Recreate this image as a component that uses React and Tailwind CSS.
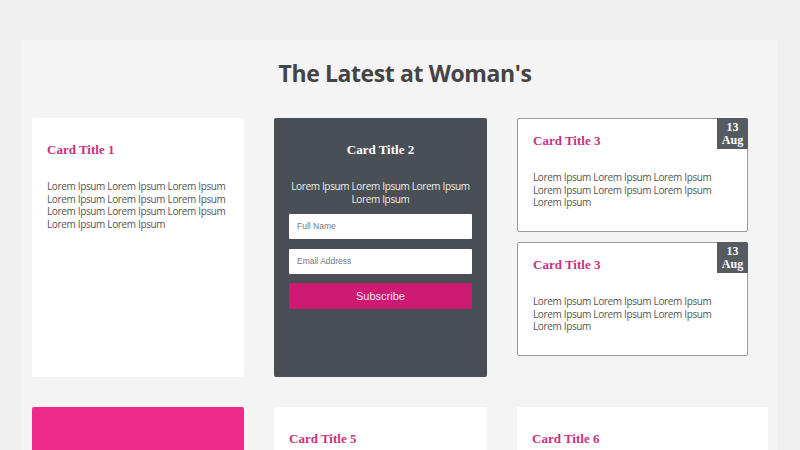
export default function App() {
  const serif = { fontFamily: '"Liberation Serif", "Times New Roman", serif' };
  const lorem3 = "Lorem Ipsum Lorem Ipsum Lorem Ipsum Lorem Ipsum Lorem Ipsum Lorem Ipsum Lorem Ipsum";
  const DateCard = () => (
    <div className="relative w-[231px] h-[114px] bg-white border border-[#9a9a9a] rounded-[2px] px-[15px]">
      <div className="absolute top-[-1px] right-[-1px] w-[31px] h-[31px] bg-[#565b62] text-white text-[12px] font-bold leading-[13px] flex flex-col items-center justify-center rounded-tr-[2px]" style={serif}>
        <span>13</span>
        <span>Aug</span>
      </div>
      <h3 className="text-[#cc2f7f] text-[13px] font-bold mt-[13px] leading-[18px]" style={serif}>Card Title 3</h3>
      <p className="mt-[21px] text-[10px] leading-[12.5px] tracking-[-0.35px] text-[#555] w-[190px]">{lorem3}</p>
    </div>
  );
  return (
    <div className="min-h-[450px] bg-[#efefef] pt-[40px] px-[21px] overflow-hidden" style={{ fontFamily: '"Open Sans", sans-serif' }}>
      <div className="bg-[#f4f4f4] w-[757px] h-[410px] pl-[11px] pt-[18px]">
        <h1 className="text-center text-[23px] font-bold text-[#444] leading-[30px] tracking-[-0.4px]">The Latest at Woman's</h1>
        <div className="grid grid-cols-[212px_213px_251px] gap-x-[30px] gap-y-[30px] mt-[30px]">
          <div className="bg-white h-[259px] rounded-[2px] px-[15px]">
            <h3 className="text-[#cc2f7f] text-[13px] font-bold mt-[23px] leading-[18px]" style={serif}>Card Title 1</h3>
            <p className="mt-[21px] text-[10px] leading-[12.5px] tracking-[-0.35px] text-[#555]">Lorem Ipsum Lorem Ipsum Lorem Ipsum Lorem Ipsum Lorem Ipsum Lorem Ipsum Lorem Ipsum Lorem Ipsum Lorem Ipsum Lorem Ipsum Lorem Ipsum</p>
          </div>
          <div className="bg-[#4a4f55] h-[259px] rounded-[2px] px-[15px] flex flex-col">
            <h3 className="text-white text-[13px] font-bold mt-[23px] leading-[18px] text-center" style={serif}>Card Title 2</h3>
            <p className="mt-[21px] text-[10px] leading-[12.5px] tracking-[-0.35px] text-[#eee] text-center">Lorem Ipsum Lorem Ipsum Lorem Ipsum Lorem Ipsum</p>
            <div className="mt-[9px] h-[25px] bg-white rounded-[1px] flex items-center px-[8px] text-[8.5px] text-[#777]" style={{ fontFamily: '"Liberation Sans", Arial, sans-serif' }}>Full Name</div>
            <div className="mt-[10px] h-[25px] bg-white rounded-[1px] flex items-center px-[8px] text-[8.5px] text-[#777]" style={{ fontFamily: '"Liberation Sans", Arial, sans-serif' }}>Email Address</div>
            <div className="mt-[9px] h-[26px] bg-[#cd1a72] rounded-[1px] flex items-center justify-center text-[11px] text-[#fbe0ee]" style={{ fontFamily: '"Liberation Sans", Arial, sans-serif' }}>Subscribe</div>
          </div>
          <div className="flex flex-col gap-[10px]">
            <DateCard />
            <DateCard />
          </div>
          <div className="bg-[#ee2a8a] h-[100px] rounded-[2px]"></div>
          <div className="bg-white h-[100px] rounded-[2px] px-[15px]">
            <h3 className="text-[#cc2f7f] text-[13px] font-bold mt-[23px] leading-[18px]" style={serif}>Card Title 5</h3>
          </div>
          <div className="bg-white h-[100px] rounded-[2px] px-[15px]">
            <h3 className="text-[#cc2f7f] text-[13px] font-bold mt-[23px] leading-[18px]" style={serif}>Card Title 6</h3>
          </div>
        </div>
      </div>
    </div>
  );
}
